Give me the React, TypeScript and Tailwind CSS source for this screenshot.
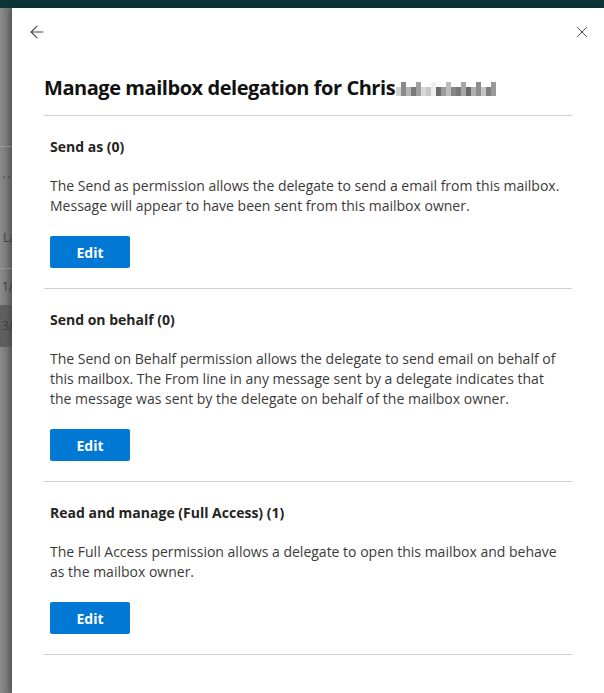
import { ArrowLeft, X } from "lucide-react";

const sections = [
  {
    title: "Send as (0)",
    text: "The Send as permission allows the delegate to send a email from this mailbox. Message will appear to have been sent from this mailbox owner.",
  },
  {
    title: "Send on behalf (0)",
    text: "The Send on Behalf permission allows the delegate to send email on behalf of this mailbox. The From line in any message sent by a delegate indicates that the message was sent by the delegate on behalf of the mailbox owner.",
  },
  {
    title: "Read and manage (Full Access) (1)",
    text: "The Full Access permission allows a delegate to open this mailbox and behave as the mailbox owner.",
  },
];

function Blur() {
  // pixelated name, as in the screenshot
  const cols = ["#d0d0d0", "#8a8a8a", "#b5b5b5", "#7a7a7a", "#a0a0a0", "#d8d8d8", "#c8c8c8", "#eeeeee", "#6e6e6e", "#9a9a9a", "#bcbcbc", "#858585", "#777777", "#a8a8a8", "#6a6a6a", "#b0b0b0", "#8e8e8e", "#c4c4c4", "#7e7e7e", "#999999"];
  return (
    <span className="inline-flex items-end h-[16px] ml-[1px]">
      {cols.map((c, i) => (
        <span
          key={i}
          className="inline-block w-[5px]"
          style={{ backgroundColor: c, height: i % 3 === 1 ? 14 : 9 }}
        />
      ))}
    </span>
  );
}

export default function App() {
  return (
    <div className="w-[604px] h-[693px] overflow-hidden flex flex-col bg-white font-['Open_Sans',sans-serif]">
      <div className="h-[8px] bg-[#0d3537] shrink-0" />
      <div className="flex flex-1">
        <div className="w-[12px] shrink-0 bg-gradient-to-r from-[#8c8c8c] to-[#6c6c6c] text-[12px] text-[#3f3f3f] leading-none overflow-hidden">
          <div className="h-[139px] border-b border-[#999]" />
          <div className="h-[33px] flex items-end pl-[2px] tracking-[2px]">..</div>
          <div className="h-[64px] flex items-end pl-[3px]">La</div>
          <div className="h-[25px] border-b border-[#999]" />
          <div className="h-[36px] flex items-center pl-[2px]">1/</div>
          <div className="h-[42px] bg-[#5f5f5f] flex items-center pl-[2px]">3/</div>
        </div>
        <div className="flex-1 pl-[32px] pr-[32px] shadow-[-2px_0_6px_rgba(0,0,0,0.25)]">
          <div className="flex justify-between items-center h-[48px] -ml-[17px] -mr-[19px]">
            <ArrowLeft className="w-[20px] h-[20px] text-[#484644]" strokeWidth={1.3} />
            <X className="w-[18px] h-[18px] text-[#484644]" strokeWidth={1.3} />
          </div>
          <h1 className="text-[20px] leading-[28px] font-bold tracking-[-0.45px] text-[#111] mt-[18px] pb-[13px] border-b border-[#d2d0ce] flex items-center">
            Manage mailbox delegation for Chris<Blur />
          </h1>
          {sections.map((s) => (
            <div key={s.title} className="border-b border-[#d2d0ce] px-[6px] pt-[21px] pb-[20px]">
              <div className="text-[14px] leading-[20px] font-bold text-[#252423]">{s.title}</div>
              <p className="text-[14px] leading-[20px] text-[#3b3a39] mt-[19px]">{s.text}</p>
              <button className="mt-[20px] w-[80px] h-[32px] rounded-[2px] bg-[#0078d4] text-white text-[14px] font-bold">
                Edit
              </button>
            </div>
          ))}
        </div>
      </div>
    </div>
  );
}
